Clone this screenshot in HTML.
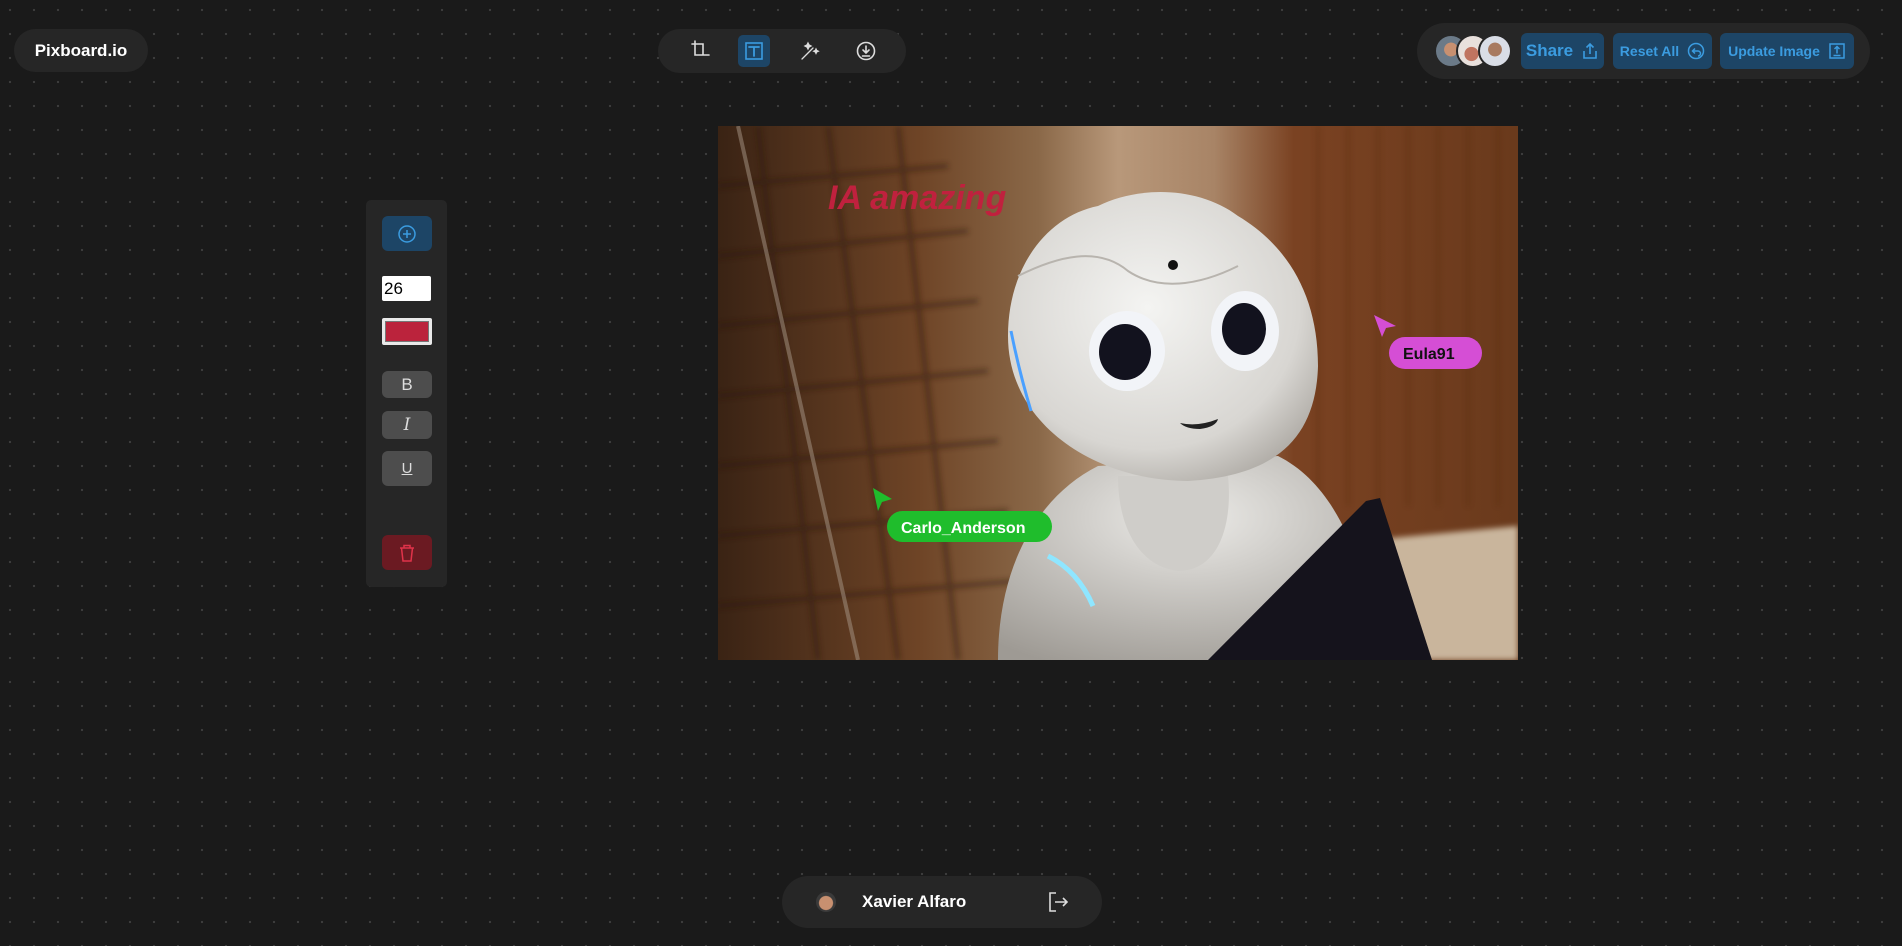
<!DOCTYPE html>
<html><head><meta charset="utf-8"><style>
*{margin:0;padding:0;box-sizing:border-box}
body{width:1902px;height:946px;overflow:hidden;background:#1a1a1a;background-image:radial-gradient(circle,#3e3e3e 1px,transparent 1.3px);background-size:24px 24px;background-position:-2px -2px;font-family:"Liberation Sans",sans-serif;position:relative}
.pill{position:absolute;background:#262626;border-radius:30px}
.abs{position:absolute}
.btn{position:absolute;background:#1d4566;color:#3b9ce0;border-radius:6px;font-weight:bold;display:flex;align-items:center;justify-content:center;gap:8px}
.tb{position:absolute;background:#4d4d4d;border-radius:6px;color:#ddd;display:flex;align-items:center;justify-content:center;font-size:17px}
.av{position:absolute;width:34px;height:34px;border-radius:50%;border:2px solid #262626}
</style></head><body>
<div class="pill" style="left:14px;top:29px;width:134px;height:43px;display:flex;align-items:center;justify-content:center;color:#fff;font-weight:bold;font-size:17px">Pixboard.io</div>

<div class="pill" style="left:658px;top:29px;width:248px;height:44px"></div>
<svg class="abs" style="left:658px;top:29px" width="248" height="44" viewBox="0 0 248 44" fill="none" stroke="#ddd" stroke-width="1.6" stroke-linecap="round">
<path d="M34 15h11v11M37 12v14h14"/>
<rect x="80" y="6" width="32" height="32" rx="5" fill="#1d4566" stroke="none"/>
<rect x="88" y="14" width="16" height="16" stroke="#3b9ce0"/>
<path d="M91 18h10M96 18v9" stroke="#3b9ce0" stroke-width="1.8"/>
<path d="M144 30l11-11M150 14l1 2 2 1-2 1-1 2-1-2-2-1 2-1zM158 20l.7 1.5 1.5.7-1.5.7-.7 1.5-.7-1.5-1.5-.7 1.5-.7z" fill="#ddd" stroke-width="1.3"/>
<circle cx="208" cy="22" r="8.5"/><path d="M208 17v7M205 21l3 3 3-3M204.5 27h7"/>
</svg>

<div class="pill" style="left:1417px;top:23px;width:453px;height:56px"></div>
<div class="av" style="left:1434px;top:34px;background:radial-gradient(circle at 50% 45%,#c89070 0 30%,#6b7a88 32%)"></div>
<div class="av" style="left:1456px;top:34px;background:radial-gradient(circle at 45% 60%,#c07460 0 28%,#e8e0dc 30%)"></div>
<div class="av" style="left:1478px;top:34px;background:radial-gradient(circle at 50% 45%,#a87a60 0 30%,#d9dde6 32%)"></div>
<div class="btn" style="left:1521px;top:33px;width:83px;height:36px;font-size:17px">Share <svg width="18" height="18" viewBox="0 0 18 18" fill="none" stroke="#3b9ce0" stroke-width="1.6"><path d="M9 2v10M5.5 5.5L9 2l3.5 3.5M3 9v7h12V9"/></svg></div>
<div class="btn" style="left:1613px;top:33px;width:99px;height:36px;font-size:14px">Reset All <svg width="18" height="18" viewBox="0 0 18 18" fill="none" stroke="#3b9ce0" stroke-width="1.5"><circle cx="9" cy="9" r="7.5"/><path d="M6 9h5a2.5 2.5 0 010 5M8 6.5L5.5 9 8 11.5"/></svg></div>
<div class="btn" style="left:1720px;top:33px;width:134px;height:36px;font-size:14px">Update Image <svg width="18" height="18" viewBox="0 0 18 18" fill="none" stroke="#3b9ce0" stroke-width="1.5"><rect x="2" y="2" width="14" height="14"/><path d="M9 4.5v7M6.5 7L9 4.5 11.5 7M5.5 13.5h7"/></svg></div>

<div class="abs" style="left:366px;top:200px;width:81px;height:387px;background:#262626;border-radius:5px"></div>
<div class="btn" style="left:382px;top:216px;width:50px;height:35px"><svg width="20" height="20" viewBox="0 0 20 20" fill="none" stroke="#3b9ce0" stroke-width="1.5"><circle cx="10" cy="10" r="8"/><path d="M10 6v8M6 10h8"/></svg></div>
<div class="abs" style="left:382px;top:276px;width:49px;height:25px;background:#fff;border-radius:2px;font-size:17px;color:#000;padding:3px 2px">26</div>
<div class="abs" style="left:382px;top:318px;width:50px;height:27px;background:#e9e9e9;padding:3px;border-radius:2px"><div style="width:100%;height:100%;background:#bb233c;border:1px solid #777"></div></div>
<div class="tb" style="left:382px;top:371px;width:50px;height:27px">B</div>
<div class="tb" style="left:382px;top:411px;width:50px;height:28px;font-style:italic;font-family:'DejaVu Serif',serif">I</div>
<div class="tb" style="left:382px;top:451px;width:50px;height:35px;text-decoration:underline;font-size:15px">U</div>
<div class="tb" style="left:382px;top:535px;width:50px;height:35px;background:#6b1a22"><svg width="18" height="20" viewBox="0 0 18 20" fill="none" stroke="#e0334a" stroke-width="1.5"><path d="M2 5h14M6 5V2.5h6V5M3.5 5l1.5 13h8l1.5-13"/></svg></div>

<svg class="abs" style="left:718px;top:126px" width="800" height="534" viewBox="0 0 800 534">
<defs>
<linearGradient id="bg" x1="0" x2="1"><stop offset="0" stop-color="#3a2314"/><stop offset=".25" stop-color="#6e4426"/><stop offset=".4" stop-color="#8a6848"/><stop offset=".5" stop-color="#b8987a"/><stop offset=".62" stop-color="#a88466"/><stop offset=".72" stop-color="#7a4222"/><stop offset="1" stop-color="#6a3a1c"/></linearGradient>
<radialGradient id="hd" cx=".45" cy=".4" r=".7"><stop offset="0" stop-color="#f4f4f2"/><stop offset=".7" stop-color="#d8d6d2"/><stop offset="1" stop-color="#a8a49e"/></radialGradient>
<radialGradient id="bd" cx=".5" cy=".3" r=".8"><stop offset="0" stop-color="#ecebe8"/><stop offset="1" stop-color="#9e9a94"/></radialGradient>
<filter id="bl"><feGaussianBlur stdDeviation="3"/></filter>
</defs>
<rect width="800" height="534" fill="url(#bg)"/>
<path d="M590 420L800 400V534H600Z" fill="#c9b59c" filter="url(#bl)"/>
<g stroke="#2a170c" stroke-width="5" opacity=".45" filter="url(#bl)">
<path d="M0 60l230 -20M0 130l250 -25M0 200l260 -25M0 270l270 -25M0 340l280 -25M0 410l290 -25M0 480l300 -25"/>
<path d="M40 0l60 534M110 0l70 534M180 0l60 534"/>
</g>
<path d="M20 0l120 534" stroke="#a89888" stroke-width="4" opacity=".5"/>
<g stroke="#4a2410" stroke-width="3" opacity=".3" filter="url(#bl)"><path d="M600 0v380M630 0v380M660 0v380M690 0v380M720 0v380M750 0v380M780 0v380"/></g>
<path d="M280 534C280 440 320 370 380 340L560 330C620 360 650 440 660 534Z" fill="url(#bd)"/>
<path d="M400 350C400 400 420 440 460 445 500 445 515 400 510 350Z" fill="#cfcdc9"/>
<path d="M290 210C290 140 330 90 380 80 420 60 480 60 520 90 570 120 600 170 600 240 598 310 560 350 470 355 380 355 290 300 290 210Z" fill="url(#hd)"/>
<path d="M300 150C340 130 380 120 410 145 440 165 480 160 520 140" stroke="#b8b4ae" stroke-width="2" fill="none"/>
<ellipse cx="409" cy="225" rx="38" ry="40" fill="#f2f4f8"/>
<ellipse cx="407" cy="226" rx="26" ry="28" fill="#12121e"/>
<ellipse cx="527" cy="205" rx="34" ry="40" fill="#f2f4f8"/>
<ellipse cx="526" cy="203" rx="22" ry="26" fill="#12121e"/>
<circle cx="455" cy="139" r="5" fill="#111"/>
<path d="M462 297q18 4 38-4q-2 8-18 10q-14 0-20-6z" fill="#222"/>
<path d="M293 205q8 40 20 80" stroke="#4aa0ff" stroke-width="3" fill="none"/>
<path d="M330 430q30 15 45 50" stroke="#8fe6ff" stroke-width="5" fill="none"/>
<path d="M648 375L490 534H714L662 372Z" fill="#15131c"/>
<text x="110" y="83" font-family="Liberation Sans,sans-serif" font-size="34" font-weight="bold" font-style="italic" fill="#c0213e">IA amazing</text>
<path d="M155 362l5 23 4-9 10-3z" fill="#1fbd2c"/>
<rect x="169" y="385" width="165" height="31" rx="15.5" fill="#1fbd2c"/>
<text x="183" y="407" font-family="Liberation Sans,sans-serif" font-size="16" font-weight="bold" fill="#fff">Carlo_Anderson</text>
<path d="M656 189l8 22 4-9 10-2z" fill="#d54ed5"/>
<rect x="671" y="211" width="93" height="32" rx="16" fill="#d54ed5"/>
<text x="685" y="233" font-family="Liberation Sans,sans-serif" font-size="16" font-weight="bold" fill="#111">Eula91</text>
</svg>

<div class="pill" style="left:782px;top:876px;width:320px;height:52px"></div>
<div class="abs" style="left:816px;top:892px;width:20px;height:20px;border-radius:50%;background:radial-gradient(circle at 50% 55%,#c89070 0 45%,#3a3a3a 50%)"></div>
<div class="abs" style="left:862px;top:892px;color:#fff;font-weight:bold;font-size:17px">Xavier Alfaro</div>
<svg class="abs" style="left:1047px;top:891px" width="22" height="22" viewBox="0 0 22 22" fill="none" stroke="#ddd" stroke-width="1.6"><path d="M9 2H3v18h6M8 11h12M16 7l4 4-4 4"/></svg>
</body></html>
